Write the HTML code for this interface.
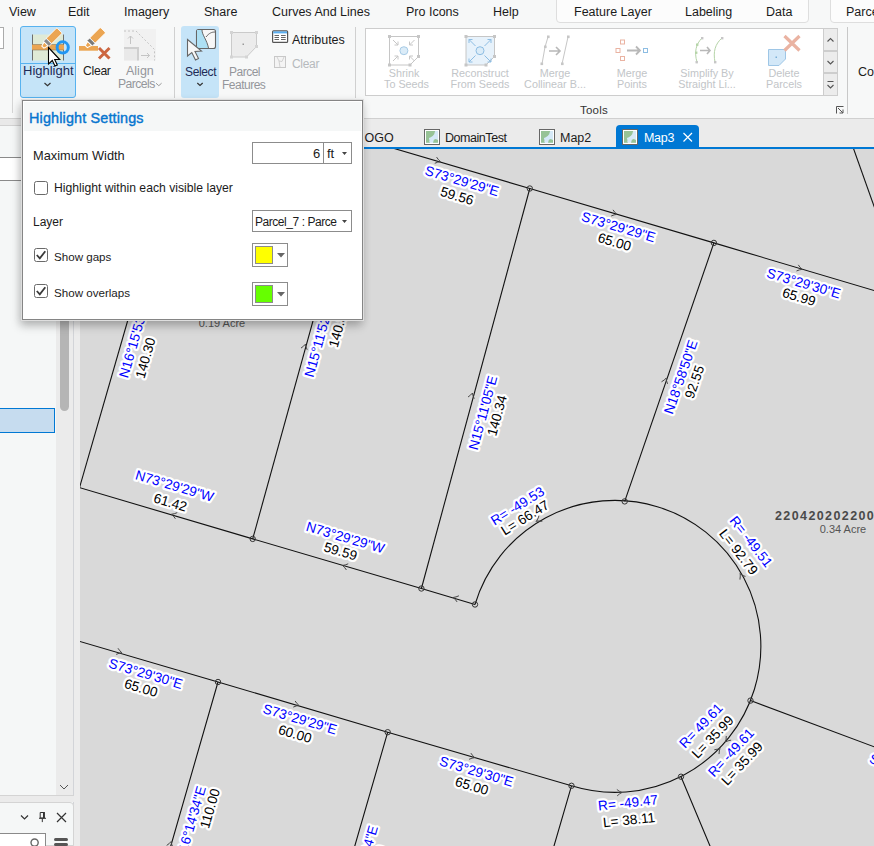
<!DOCTYPE html>
<html><head><meta charset="utf-8">
<style>
*{margin:0;padding:0;box-sizing:border-box}
html,body{width:874px;height:846px;overflow:hidden;background:#f7f8f8;font-family:"Liberation Sans",sans-serif;color:#1b1b1b}
.a{position:absolute;white-space:nowrap}
.t{font-size:12.5px;line-height:14px}
.dis{color:#b6babd}
.g{font-size:10.8px;line-height:11px;text-align:center;color:#c2c5c8}
svg{overflow:visible}
</style></head><body>
<!-- menu bar -->
<div class="a" style="left:0;top:0;width:874px;height:118px;background:#f7f8f8"></div>
<div class="a t" style="left:9px;top:5px">View</div>
<div class="a t" style="left:68px;top:5px">Edit</div>
<div class="a t" style="left:124px;top:5px">Imagery</div>
<div class="a t" style="left:204px;top:5px">Share</div>
<div class="a t" style="left:272px;top:5px">Curves And Lines</div>
<div class="a t" style="left:406px;top:5px">Pro Icons</div>
<div class="a t" style="left:493px;top:5px">Help</div>
<div class="a" style="left:556px;top:-4px;width:253px;height:27px;background:#fcfcfc;border:1px solid #dedede;border-radius:4px"></div>
<div class="a t" style="left:574px;top:5px">Feature Layer</div>
<div class="a t" style="left:685px;top:5px">Labeling</div>
<div class="a t" style="left:766px;top:5px">Data</div>
<div class="a" style="left:830px;top:-4px;width:60px;height:27px;background:#fcfcfc;border:1px solid #dedede;border-radius:4px"></div>
<div class="a t" style="left:846px;top:5px">Parcel</div>

<!-- ribbon -->
<div class="a" style="left:-4px;top:27px;width:8px;height:22px;background:#fff;border:1px solid #ababab"></div>
<div class="a" style="left:12px;top:27px;width:1px;height:86px;background:#d5d5d5"></div>
<div class="a" style="left:20px;top:26px;width:56px;height:72px;background:#c5e4f8;border:1px solid #57b2ef;border-radius:3px"></div>
<div class="a" style="left:21px;top:63px;width:54px;height:1px;background:#57b2ef"></div>
<div class="a" style="left:181px;top:26px;width:38px;height:72px;background:#c5e4f8;border-radius:3px"></div>
<div class="a" style="left:174px;top:27px;width:1px;height:71px;background:#d0d0d0"></div>
<div class="a" style="left:355px;top:27px;width:1px;height:71px;background:#d0d0d0"></div>
<div class="a" style="left:847px;top:27px;width:1px;height:87px;background:#c8c8c8"></div>

<div class="a t" style="left:23px;top:64px;font-size:13px;color:#1e2a56">Highlight</div>
<div class="a t" style="left:83px;top:64px;font-size:12.2px;letter-spacing:-0.3px">Clear</div>
<div class="a t" style="left:126px;top:64px;color:#94969b">Align</div>
<div class="a t" style="left:118px;top:77px;color:#94969b;font-size:12.2px;letter-spacing:-0.55px">Parcels</div>
<div class="a t" style="left:185px;top:65px;font-size:12px;color:#1e2a56;letter-spacing:-0.35px">Select</div>
<div class="a t" style="left:229px;top:65px;font-size:12px;letter-spacing:-0.5px;color:#94969b">Parcel</div>
<div class="a t" style="left:222px;top:78px;font-size:12px;letter-spacing:-0.5px;color:#94969b">Features</div>
<div class="a t" style="left:292px;top:33px">Attributes</div>
<div class="a t dis" style="left:292px;top:57px;font-size:12px;letter-spacing:-0.3px">Clear</div>
<div class="a t" style="left:858px;top:65px">Co</div>

<!-- gallery -->
<div class="a" style="left:365px;top:28px;width:473px;height:68px;background:#fff;border:1px solid #cdcdcd"></div>
<div class="a" style="left:823px;top:29px;width:14px;height:66px;background:#ececec;border-left:1px solid #cdcdcd"></div>
<div class="a" style="left:823px;top:50px;width:14px;height:2px;background:#cdcdcd"></div>
<div class="a" style="left:823px;top:72px;width:14px;height:2px;background:#cdcdcd"></div>
<div class="a g" style="left:384px;top:68px;width:40px">Shrink<br>To Seeds</div>
<div class="a g" style="left:447px;top:68px;width:66px">Reconstruct<br>From Seeds</div>
<div class="a g" style="left:522px;top:68px;width:66px">Merge<br>Collinear B...</div>
<div class="a g" style="left:599px;top:68px;width:66px">Merge<br>Points</div>
<div class="a g" style="left:674px;top:68px;width:66px">Simplify By<br>Straight Li...</div>
<div class="a g" style="left:751px;top:68px;width:66px">Delete<br>Parcels</div>
<div class="a t" style="left:580px;top:103px;font-size:11.5px;color:#333;letter-spacing:0.2px">Tools</div>

<!-- ribbon icons -->
<!-- ICONS -->
<svg class="a" style="left:0;top:0" width="874" height="118" viewBox="0 0 874 118">
 <!-- highlight icon -->
 <rect x="32.5" y="34.5" width="31" height="26" fill="#dfead6"/>
 <path d="M32.5 34.5 V60.5 M63.5 34.5 V60.5" stroke="#6e6e6e" stroke-width="1"/>
 <rect x="32" y="44.5" width="32" height="5.5" fill="#eba552"/>
 <path d="M32 44.5 H64 M32 50 H64" stroke="#8a7a60" stroke-width="0.6"/>
 <g transform="translate(51 39) rotate(45)">
  <rect x="-3.8" y="-12" width="7.6" height="15" rx="1" fill="#eba552" stroke="#fff" stroke-width="0.8"/>
  <rect x="-3.8" y="3" width="7.6" height="4" fill="#8a8a8a" stroke="#fff" stroke-width="0.8"/>
  <path d="M-2.8 7 L-1.5 11.5 L1.5 11.5 L2.8 7 z" fill="#eba552" stroke="#fff" stroke-width="1"/>
 </g>
 <circle cx="62.7" cy="47.4" r="5.6" fill="none" stroke="#2196f3" stroke-width="3"/>
 <path d="M48.5 47.5 L48.5 64 L52.3 60.5 L55 66 L57.3 65 L54.7 59.5 L59.7 59.5 Z" fill="#fff" stroke="#000" stroke-width="1.1"/>
 <path d="M44.5 83 l3 2.6 l3 -2.6" fill="none" stroke="#333" stroke-width="1.2"/>
 <!-- clear icon -->
 <rect x="79" y="46" width="19" height="4.7" fill="#eba552"/>
 <g transform="translate(94.5 38.5) rotate(45)">
  <rect x="-3.8" y="-12" width="7.6" height="15" rx="1" fill="#eba552" stroke="#fff" stroke-width="0.8"/>
  <rect x="-3.8" y="3" width="7.6" height="4" fill="#7a7a7a" stroke="#fff" stroke-width="0.8"/>
  <path d="M-2.8 7 L-1.5 11.5 L1.5 11.5 L2.8 7 z" fill="#eba552" stroke="#fff" stroke-width="1"/>
 </g>
 <path d="M99 48 L109.5 58.5 M109.5 48 L99 58.5" stroke="#cc6640" stroke-width="3"/>
 <!-- align parcels (disabled) -->
 <rect x="124" y="29" width="32" height="31.5" fill="#f1f1f1"/><rect x="124" y="48" width="14" height="12.5" fill="#e9e9e9"/>
 <path d="M124 31 H136 L154.5 49.5 V60.5" fill="none" stroke="#c4c4c4" stroke-width="1" stroke-dasharray="2 2"/>
 <path d="M124 48 H138 V60.5" fill="none" stroke="#cfcfcf" stroke-width="2"/>
 <path d="M130.5 44 V36 M128 38.5 L130.5 36 L133 38.5 M141 55.5 H149.5 M147 53 L149.5 55.5 L147 58" fill="none" stroke="#c4c4c4" stroke-width="1"/>
 <path d="M156 83.2 l2.8 2.5 l2.8 -2.5" fill="none" stroke="#999" stroke-width="1"/>
 <!-- select icon -->
 <rect x="196.5" y="29.5" width="19" height="19" rx="2" fill="#f7f7f7" stroke="#666" stroke-width="1.1"/>
 <path d="M197 30 H202 C202 35 207 40 208.5 48 H197 Z" fill="#ade0f4"/>
 <path d="M202 30 C202 35 207 40 208.5 48 M206 37 C209 33 212 32 215 32" fill="none" stroke="#666" stroke-width="1"/>
 <path d="M187.5 39.5 L187.5 56 L191.8 52.5 L195.5 60 L198.5 58.5 L195 51.5 L201.5 51 Z" fill="#f7f7f7" stroke="#666" stroke-width="1.1"/>
 <path d="M197.3 83 l2.7 2.5 l2.7 -2.5" fill="none" stroke="#333" stroke-width="1.2"/>
 <!-- parcel features (disabled) -->
 <path d="M231.5 32.5 H256.5 V46.5 L246.5 57 H231.5 Z" fill="#ececec" stroke="#cacaca" stroke-width="1"/>
 <g fill="#d4d4d4"><rect x="230" y="31" width="3" height="3"/><rect x="255" y="31" width="3" height="3"/><rect x="255" y="45" width="3" height="3"/><rect x="245" y="55.5" width="3" height="3"/><rect x="230" y="55.5" width="3" height="3"/><rect x="242.5" y="43.5" width="1.5" height="1.5" fill="#999"/></g>
 <!-- attributes -->
 <rect x="272.6" y="30.8" width="15" height="11.6" rx="1" fill="#fff" stroke="#555" stroke-width="1.2"/>
 <rect x="273.2" y="31.4" width="13.8" height="2" fill="#5aaef0"/>
 <path d="M274.5 35.5 H279 M274.5 37.5 H279 M274.5 39.5 H279 M281 35.5 H285.7 M281 37.5 H285.7 M281 39.5 H285.7" stroke="#555" stroke-width="0.9"/>
 <!-- clear small (disabled) -->
 <rect x="274.5" y="56.5" width="11" height="11" fill="#f4f4f4" stroke="#c8c8c8"/>
 <path d="M277 57 L279 61 L282 61.5 L284 57 M279 61 L280 67" fill="none" stroke="#c8c8c8" stroke-width="0.8"/>
 <!-- shrink -->
 <g fill="none" stroke="#c6c6c6" stroke-width="1">
  <path d="M389.5 36.5 H418.5 V56.5 L410 65 H389.5 Z"/>
 </g>
 <g fill="#c6c6c6"><rect x="388" y="35" width="3" height="3"/><rect x="417" y="35" width="3" height="3"/><rect x="417" y="55" width="3" height="3"/><rect x="408.5" y="63.5" width="3" height="3"/><rect x="388" y="63.5" width="3" height="3"/></g>
 <circle cx="403.9" cy="50.7" r="4" fill="#dbecf8" stroke="#a7cbe6" stroke-width="1"/>
 <path d="M393 40 L398 45 M398 41.5 V45 H394.5 M414.5 40 L409.5 45 M409.5 41.5 V45 H413 M393 61 L398 56 M394.5 56 H398 V59.5 M414.5 61 L409.5 56 M413 56 H409.5 V59.5" fill="none" stroke="#c6c6c6" stroke-width="1"/>
 <!-- reconstruct -->
 <path d="M466 36.5 H494.5 V56.5 L486 65 H466 Z" fill="#e7f2fb" stroke="#c6c6c6" stroke-width="1"/>
 <g fill="#c6c6c6"><rect x="464.5" y="35" width="3" height="3"/><rect x="493" y="35" width="3" height="3"/><rect x="493" y="55" width="3" height="3"/><rect x="484.5" y="63.5" width="3" height="3"/><rect x="464.5" y="63.5" width="3" height="3"/></g>
 <circle cx="480" cy="50.7" r="4" fill="#dbecf8" stroke="#8dbde3" stroke-width="1"/>
 <path d="M469 39.5 L475.5 46 M469 43 V39.5 H472.5 M491 39.5 L484.5 46 M487.5 39.5 H491 V43 M469 62 L475.5 55.5 M469 58.5 V62 H472.5 M491 62 L484.5 55.5 M491 58.5 V62 H487.5" fill="none" stroke="#8dbde3" stroke-width="1"/>
 <!-- merge collinear -->
 <path d="M548 37 L545 47 L542 64 M568 37 L562 64" fill="none" stroke="#c6c6c6" stroke-width="1"/>
 <g fill="#c6c6c6"><rect x="547" y="35.5" width="2.6" height="2.6"/><rect x="544" y="45.5" width="2.6" height="2.6"/><rect x="540.5" y="62.5" width="2.6" height="2.6"/><rect x="567" y="35.5" width="2.6" height="2.6"/><rect x="561" y="62.5" width="2.6" height="2.6"/></g>
 <path d="M549 51 H560 M556 47 L560 51 L556 55" fill="none" stroke="#b8b8b8" stroke-width="1.6"/>
 <!-- merge points -->
 <g fill="none" stroke="#eab3a2" stroke-width="1"><rect x="620.5" y="40" width="4" height="4"/><rect x="616" y="48.5" width="4" height="4"/><rect x="620.5" y="56.5" width="4" height="4"/></g>
 <path d="M627 50.5 H640 M636 46.5 L640 50.5 L636 54.5" fill="none" stroke="#b8b8b8" stroke-width="1.8"/>
 <rect x="643.5" y="48.5" width="4" height="4" fill="none" stroke="#8dbde3" stroke-width="1"/>
 <!-- simplify -->
 <path d="M702 38 C696 44 694 52 697 62 M722 38 C715 44 713 52 715 62" fill="none" stroke="#b5d4a8" stroke-width="1"/>
 <g fill="#c6c6c6"><rect x="701" y="37" width="2.4" height="2.4"/><rect x="695.5" y="61" width="2.4" height="2.4"/><rect x="721" y="37" width="2.4" height="2.4"/><rect x="714" y="61" width="2.4" height="2.4"/></g>
 <g fill="#b5d4a8"><rect x="696" y="43.5" width="2.4" height="2.4"/><rect x="695" y="51.5" width="2.4" height="2.4"/></g>
 <path d="M700 50.5 H710 M707 47 L710 50.5 L707 54" fill="none" stroke="#b8b8b8" stroke-width="1.6"/>
 <!-- delete parcels -->
 <path d="M768.5 49.5 H785.5 V59 L779 65.5 H768.5 Z" fill="#d3e8f8" stroke="#9ec6e6" stroke-width="1"/>
 <rect x="775.5" y="56.5" width="1.5" height="1.5" fill="#7aaed6"/>
 <path d="M784.5 36 L799.5 50.5 M799.5 36 L784.5 50.5" stroke="#eab3a2" stroke-width="3.2"/>
 <!-- gallery scroll arrows -->
 <path d="M827.5 41.5 l3 -3 l3 3 M827.5 61 l3 3 l3 -3 M827.5 85 l3 3 l3 -3 M827.5 81.5 h6" fill="none" stroke="#555" stroke-width="1.1"/>
 <!-- dialog launcher -->
 <path d="M836.5 113.5 V106.5 H843.5 M838 108 L843 113 M839.5 113 H843 V109.5" fill="none" stroke="#555" stroke-width="1"/>
</svg>

<!-- /ICONS -->

<!-- ribbon bottom -->
<div class="a" style="left:0;top:118px;width:874px;height:1px;background:#d0d0d0"></div>

<!-- left panel -->
<div class="a" style="left:0;top:119px;width:73px;height:727px;background:#f5f7f7"></div>
<div class="a" style="left:0;top:119px;width:73px;height:7px;background:#e9e9e9;border-bottom:1px solid #d2d2d2"></div>
<div class="a" style="left:0;top:157px;width:73px;height:24px;background:#fff;border-top:1px solid #8a8a8a;border-bottom:1px solid #8a8a8a"></div>
<div class="a" style="left:56px;top:126px;width:17px;height:669px;background:#ebebeb"></div>
<div class="a" style="left:60px;top:130px;width:9px;height:281px;background:#b5b5b5;border-radius:5px"></div>
<div class="a" style="left:0;top:408px;width:55px;height:25px;background:#c6dcef;border:1px solid #0078d4;border-left:none"></div>
<div class="a" style="left:73px;top:119px;width:1px;height:727px;background:#d2d4d8"></div>
<div class="a" style="left:74px;top:119px;width:6px;height:727px;background:#ececec"></div>
<div class="a" style="left:0;top:795px;width:74px;height:7px;background:#ebebeb;border-top:1px solid #d4d4d4"></div>
<div class="a" style="left:-2px;top:802px;width:76px;height:44px;background:#f5f7f7;border:1px solid #d4d4d4;border-radius:0 4px 0 0"></div>
<div class="a" style="left:-2px;top:833px;width:48px;height:20px;background:#fff;border:1px solid #8a8a8a"></div>
<svg class="a" style="left:0;top:770px" width="80" height="76" viewBox="0 770 80 76">
 <path d="M60 785 L64 789 L68 785" fill="none" stroke="#555" stroke-width="1"/>
 <path d="M21 815.5 L24.5 819 L28 815.5" fill="none" stroke="#333" stroke-width="1.2"/>
 <path d="M40.2 812.5 h4 v5.5 h-4 z M39 818.3 h7 M42.3 818.3 v3.8" fill="none" stroke="#333" stroke-width="1"/><rect x="43" y="812" width="1.8" height="6" fill="#333"/>
 <path d="M57 813 L66 822 M66 813 L57 822" fill="none" stroke="#333" stroke-width="1.2"/>
 <circle cx="34.6" cy="842.6" r="3.6" fill="none" stroke="#666" stroke-width="1.4"/>
 <rect x="54" y="838" width="14" height="3" rx="1.5" fill="#555"/>
 <rect x="54" y="843" width="14" height="3" rx="1.5" fill="#555"/>
</svg>

<!-- tab strip -->
<div class="a" style="left:80px;top:119px;width:794px;height:29px;background:#ebebeb"></div>
<div class="a" style="left:80px;top:147px;width:794px;height:2px;background:#0078d4"></div>
<div class="a" style="left:616px;top:125px;width:83px;height:23px;background:#0078d4;border-radius:4px 4px 0 0"></div>
<div class="a t" style="left:364.5px;top:131px;font-size:12.5px">OGO</div>
<div class="a t" style="left:445px;top:131px;font-size:12.5px;letter-spacing:-0.45px">DomainTest</div>
<div class="a t" style="left:560px;top:131px;font-size:12.5px">Map2</div>
<div class="a t" style="left:644px;top:131px;font-size:12.5px;color:#fff;letter-spacing:-0.3px">Map3</div>
<svg class="a" style="left:0;top:118px" width="874" height="32" viewBox="0 118 874 32">
 <g>
  <rect x="424.5" y="129.5" width="15" height="15" fill="#fff" stroke="#666"/><rect x="426.0" y="131" width="12" height="11.8" fill="#d6e9f8"/><path d="M426.0 131.0 L435.1 131.0 L434.2 134.2 L432.7 135.9 L430.3 137.4 L428.9 138.0 L429.5 140.4 L429.2 141.5 L430.0 142.8 L426.0 142.8 Z M433.0 142.8 L433.9 139.8 L435.7 138.9 L438.0 140.1 L438.0 142.8 Z" fill="#97c396"/>
  <rect x="539.5" y="129.5" width="15" height="15" fill="#fff" stroke="#666"/><rect x="541.0" y="131" width="12" height="11.8" fill="#d6e9f8"/><path d="M541.0 131.0 L550.1 131.0 L549.2 134.2 L547.7 135.9 L545.3 137.4 L543.9 138.0 L544.5 140.4 L544.2 141.5 L545.0 142.8 L541.0 142.8 Z M548.0 142.8 L548.9 139.8 L550.7 138.9 L553.0 140.1 L553.0 142.8 Z" fill="#97c396"/>
  <rect x="622.5" y="129.5" width="15" height="15" fill="#fff" stroke="#666"/><rect x="624.0" y="131" width="12" height="11.8" fill="#d6e9f8"/><path d="M624.0 131.0 L633.1 131.0 L632.2 134.2 L630.7 135.9 L628.3 137.4 L626.9 138.0 L627.5 140.4 L627.2 141.5 L628.0 142.8 L624.0 142.8 Z M631.0 142.8 L631.9 139.8 L633.7 138.9 L636.0 140.1 L636.0 142.8 Z" fill="#97c396"/>
  <path d="M683.5 133 L692 141.5 M692 133 L683.5 141.5" stroke="#fff" stroke-width="1.2"/>
 </g>
</svg>

<!-- map -->
<div class="a" style="left:80px;top:149px;width:794px;height:697px;background:#d9d9d9"></div>
<!-- MAP -->
<svg class="a" style="left:80px;top:149px;overflow:hidden" width="794" height="697" viewBox="80 149 794 697">
<g fill="none" stroke="#111" stroke-width="1.1"><path d="M380.0 144.3 L529.8 188.5 L713.9 242.9 L880.0 292.3"/><path d="M853.3 148.0 L880.0 223.0"/><path d="M529.8 188.5 L421.4 588.5"/><path d="M713.9 242.9 L624.7 501.4"/><path d="M79.5 487.6 L252.7 538.9 L421.4 588.5 L475.0 604.5"/><path d="M252.7 538.9 L342.0 216.0"/><path d="M79.5 487.6 L140.0 278.0"/><path d="M76.0 640.3 L218.0 682.0 L387.7 732.2 L571.5 785.8"/><path d="M218.0 682.0 L170.8 846.0 L168.0 856.0"/><path d="M387.7 732.2 L354.8 846.0 L352.0 856.0"/><path d="M571.5 785.8 L554.0 846.0 L551.0 856.0"/><path d="M681.0 776.7 L710.0 846.0 L714.0 856.0"/><path d="M750.5 700.6 L880.0 749.0"/><path d="M475 604.5 A146.0 146.0 0 1 1 571.5 785.8"/></g>
<g fill="none" stroke="#333" stroke-width="1"><circle cx="529.8" cy="188.5" r="2.7"/><circle cx="713.9" cy="242.9" r="2.7"/><circle cx="624.7" cy="501.4" r="2.7"/><circle cx="252.7" cy="538.9" r="2.7"/><circle cx="421.4" cy="588.5" r="2.7"/><circle cx="475" cy="604.5" r="2.7"/><circle cx="218" cy="682" r="2.7"/><circle cx="387.7" cy="732.2" r="2.7"/><circle cx="571.5" cy="785.8" r="2.7"/><circle cx="681" cy="776.7" r="2.7"/><circle cx="750.5" cy="700.6" r="2.7"/></g>

<text x="222" y="327" font-size="11" fill="#555" text-anchor="middle">0.19 Acre</text>
<text x="775" y="520" font-size="12.5" font-weight="bold" fill="#4a4a4a" letter-spacing="1.4">22042020220000</text>
<text x="843" y="533" font-size="11" fill="#555" text-anchor="middle">0.34 Acre</text>
<g font-size="13.6" text-anchor="middle" stroke="#fff" stroke-width="4.6" stroke-linejoin="round" paint-order="stroke"><text transform="translate(462 181) rotate(16.5)" y="4.6" fill="#0000ff">S73°29'29&quot;E</text><text transform="translate(457 196) rotate(16.5)" y="4.6" fill="#000">59.56</text><text transform="translate(618.5 227) rotate(16.5)" y="4.6" fill="#0000ff">S73°29'29&quot;E</text><text transform="translate(614.5 242) rotate(16.5)" y="4.6" fill="#000">65.00</text><text transform="translate(803.7 283.4) rotate(16.5)" y="4.6" fill="#0000ff">S73°29'30&quot;E</text><text transform="translate(799 297) rotate(16.5)" y="4.6" fill="#000">65.99</text><text transform="translate(174.7 486) rotate(16.5)" y="4.6" fill="#0000ff">N73°29'29&quot;W</text><text transform="translate(170.3 502.5) rotate(16.5)" y="4.6" fill="#000">61.42</text><text transform="translate(345.4 537.6) rotate(16.5)" y="4.6" fill="#0000ff">N73°29'29&quot;W</text><text transform="translate(340.5 551.4) rotate(16.5)" y="4.6" fill="#000">59.59</text><text transform="translate(145.7 673.7) rotate(16.5)" y="4.6" fill="#0000ff">S73°29'30&quot;E</text><text transform="translate(141 688) rotate(16.5)" y="4.6" fill="#000">65.00</text><text transform="translate(299.9 719.2) rotate(16.5)" y="4.6" fill="#0000ff">S73°29'29&quot;E</text><text transform="translate(295 734) rotate(16.5)" y="4.6" fill="#000">60.00</text><text transform="translate(476.5 771.5) rotate(16.5)" y="4.6" fill="#0000ff">S73°29'30&quot;E</text><text transform="translate(471.8 786) rotate(16.5)" y="4.6" fill="#000">65.00</text><text transform="translate(134 340.5) rotate(-73.8)" y="4.6" fill="#0000ff">N16°15'53&quot;E</text><text transform="translate(145.5 358) rotate(-73.8)" y="4.6" fill="#000">140.30</text><text transform="translate(319 340) rotate(-74.5)" y="4.6" fill="#0000ff">N15°11'52&quot;E</text><text transform="translate(338.5 327) rotate(-74.5)" y="4.6" fill="#000">140.34</text><text transform="translate(483 412.8) rotate(-74.8)" y="4.6" fill="#0000ff">N15°11'05&quot;E</text><text transform="translate(497 415.6) rotate(-74.8)" y="4.6" fill="#000">140.34</text><text transform="translate(680.8 377) rotate(-71)" y="4.6" fill="#0000ff">N18°58'50&quot;E</text><text transform="translate(694.5 382) rotate(-71)" y="4.6" fill="#000">92.55</text><text transform="translate(517.5 506) rotate(-32)" y="4.6" fill="#0000ff">R= -49.53</text><text transform="translate(525 517.8) rotate(-32)" y="4.6" fill="#000">L= 66.47</text><text transform="translate(751 541.6) rotate(52)" y="4.6" fill="#0000ff">R= -49.51</text><text transform="translate(738.6 552) rotate(52)" y="4.6" fill="#000">L= 92.79</text><text transform="translate(701 725.7) rotate(-46)" y="4.6" fill="#0000ff">R= 49.61</text><text transform="translate(712.7 737) rotate(-46)" y="4.6" fill="#000">L= 35.99</text><text transform="translate(731 752.6) rotate(-47)" y="4.6" fill="#0000ff">R= -49.61</text><text transform="translate(742 763.5) rotate(-47)" y="4.6" fill="#000">L= 35.99</text><text transform="translate(628 802.7) rotate(-6)" y="4.6" fill="#0000ff">R= -49.47</text><text transform="translate(629 820) rotate(-6)" y="4.6" fill="#000">L= 38.11</text><text transform="translate(906 771) rotate(20)" y="4.6" fill="#0000ff">S73°29'30&quot;E</text><text transform="translate(190.8 823.6) rotate(-73.9)" y="4.6" fill="#0000ff">N16°14'34&quot;E</text><text transform="translate(210 808.5) rotate(-73.9)" y="4.6" fill="#000">110.00</text><text transform="translate(362.8 863) rotate(-73.9)" y="4.6" fill="#0000ff">N16°14'34&quot;E</text><text transform="translate(376 866) rotate(-73.9)" y="4.6" fill="#000">110.00</text></g>
<g fill="none" stroke="#444" stroke-width="0.9"><path transform="translate(440.0 161.5) rotate(16.5)" d="M-4.5 -3.2 Q-2 -1 0.5 0 Q-2 1 -4.5 3.2"/><path transform="translate(616.4 214.2) rotate(16.5)" d="M-4.5 -3.2 Q-2 -1 0.5 0 Q-2 1 -4.5 3.2"/><path transform="translate(801.7 269.2) rotate(16.5)" d="M-4.5 -3.2 Q-2 -1 0.5 0 Q-2 1 -4.5 3.2"/><path transform="translate(172.0 514.4) rotate(196.5)" d="M-4.5 -3.2 Q-2 -1 0.5 0 Q-2 1 -4.5 3.2"/><path transform="translate(343.0 565.6) rotate(196.5)" d="M-4.5 -3.2 Q-2 -1 0.5 0 Q-2 1 -4.5 3.2"/><path transform="translate(453.7 597.6) rotate(196.5)" d="M-4.5 -3.2 Q-2 -1 0.5 0 Q-2 1 -4.5 3.2"/><path transform="translate(121.4 652.6) rotate(16.5)" d="M-4.5 -3.2 Q-2 -1 0.5 0 Q-2 1 -4.5 3.2"/><path transform="translate(298.5 705.3) rotate(16.5)" d="M-4.5 -3.2 Q-2 -1 0.5 0 Q-2 1 -4.5 3.2"/><path transform="translate(474.3 757.5) rotate(16.5)" d="M-4.5 -3.2 Q-2 -1 0.5 0 Q-2 1 -4.5 3.2"/><path transform="translate(305.3 344.6) rotate(-74.5)" d="M-4.5 -3.2 Q-2 -1 0.5 0 Q-2 1 -4.5 3.2"/><path transform="translate(472.3 393.5) rotate(-74.8)" d="M-4.5 -3.2 Q-2 -1 0.5 0 Q-2 1 -4.5 3.2"/><path transform="translate(666.0 378.6) rotate(-71.0)" d="M-4.5 -3.2 Q-2 -1 0.5 0 Q-2 1 -4.5 3.2"/><path transform="translate(171.0 842.0) rotate(-73.9)" d="M-4.5 -3.2 Q-2 -1 0.5 0 Q-2 1 -4.5 3.2"/><path transform="translate(536.8 521.0) rotate(-211.7)" d="M-4.5 -3.2 Q-2 -1 0.5 0 Q-2 1 -4.5 3.2"/><path transform="translate(740.4 574.2) rotate(-120.1)" d="M-4.5 -3.2 Q-2 -1 0.5 0 Q-2 1 -4.5 3.2"/><path transform="translate(621.5 792.5) rotate(-2.7)" d="M-4.5 -3.2 Q-2 -1 0.5 0 Q-2 1 -4.5 3.2"/><path transform="translate(725.8 741.5) rotate(130.4)" d="M-4.5 -3.2 Q-2 -1 0.5 0 Q-2 1 -4.5 3.2"/><path transform="translate(719.7 748.6) rotate(-47.6)" d="M-4.5 -3.2 Q-2 -1 0.5 0 Q-2 1 -4.5 3.2"/></g>
</svg>
<!-- /MAP -->

<!-- dialog -->
<!-- DIALOG -->
<div class="a" style="left:21px;top:99px;width:343px;height:222px;background:#fff;border:1px solid #dedede;box-shadow:-2px 6px 9px -1px rgba(0,0,0,0.22),0 2px 8px rgba(0,0,0,0.10)"></div>
<div class="a" style="left:22px;top:100px;width:341px;height:220px;border:1px solid #858585"></div>
<div class="a" style="left:24px;top:102px;width:337px;height:29px;background:#f5f7f7"></div>
<div class="a" style="left:29px;top:110px;font-size:14.4px;line-height:16px;color:#0675cf;-webkit-text-stroke:0.4px #0675cf;letter-spacing:0.15px">Highlight Settings</div>
<div class="a" style="left:33px;top:149px;font-size:12.8px;line-height:14px">Maximum Width</div>
<div class="a" style="left:54px;top:181px;font-size:12.2px;line-height:14px">Highlight within each visible layer</div>
<div class="a" style="left:33px;top:215px;font-size:12px;line-height:14px">Layer</div>
<div class="a" style="left:54px;top:250px;font-size:11.6px;line-height:14px">Show gaps</div>
<div class="a" style="left:54px;top:286px;font-size:11.6px;line-height:14px">Show overlaps</div>
<!-- checkboxes -->
<div class="a" style="left:34px;top:181px;width:14px;height:14px;border:1px solid #6a6a6a;border-radius:2.5px;background:#fff"></div>
<div class="a" style="left:34px;top:248px;width:14px;height:14px;border:1px solid #6a6a6a;border-radius:2.5px;background:#fff"></div>
<div class="a" style="left:34px;top:284px;width:14px;height:14px;border:1px solid #6a6a6a;border-radius:2.5px;background:#fff"></div>
<svg class="a" style="left:0;top:0" width="874" height="330" viewBox="0 0 874 330">
 <path d="M36.8 255 L39.8 258.3 L45.3 251.3" fill="none" stroke="#3a3a3a" stroke-width="1.8"/>
 <path d="M36.8 291 L39.8 294.3 L45.3 287.3" fill="none" stroke="#3a3a3a" stroke-width="1.8"/>
</svg>
<!-- width input -->
<div class="a" style="left:252px;top:142px;width:72px;height:22px;border:1px solid #8c8c8c;background:#fff"></div>
<div class="a" style="left:323px;top:142px;width:29px;height:22px;border:1px solid #8c8c8c;background:#fff"></div>
<div class="a" style="left:313px;top:147px;font-size:13px;line-height:14px">6</div>
<div class="a" style="left:327px;top:147px;font-size:13px;line-height:14px">ft</div>
<div class="a" style="left:255px;top:215px;font-size:12px;letter-spacing:-0.45px;line-height:14px">Parcel_7 : Parce</div>
<div class="a" style="left:252px;top:210px;width:100px;height:22px;border:1px solid #8c8c8c;background:transparent"></div>
<div class="a" style="left:252px;top:243px;width:36px;height:24px;border:1px solid #8c8c8c;background:#fff"></div>
<div class="a" style="left:255px;top:246px;width:18px;height:18px;border:1px solid #8c8c8c;background:#ffff00"></div>
<div class="a" style="left:252px;top:282px;width:36px;height:24px;border:1px solid #8c8c8c;background:#fff"></div>
<div class="a" style="left:255px;top:285px;width:18px;height:18px;border:1px solid #8c8c8c;background:#66ff00"></div>
<svg class="a" style="left:0;top:0" width="874" height="330" viewBox="0 0 874 330">
 <path d="M342 152 h5 l-2.5 3 z M342 220 h5 l-2.5 3 z" fill="#444"/>
 <path d="M277 253 h8 l-4 4.5 z M277 292 h8 l-4 4.5 z" fill="#666"/>
</svg>

<!-- /DIALOG -->
</body></html>
